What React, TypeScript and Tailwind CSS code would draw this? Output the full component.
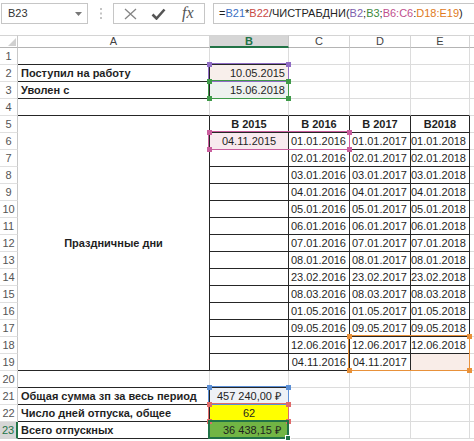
import React from 'react';

type Cell = { t?: string; b?: boolean; al?: 'l' | 'c' | 'r'; bg?: string; cls?: string };

const COLS = ['A', 'B', 'C', 'D', 'E', 'F'];
const COL_X: Record<string, number> = { A: 18, B: 209, C: 288, D: 349, E: 410, F: 469 };
const rowLine = (n: number) => 48 + n * 17 - 1; // bottom line of row n

const DARK = '#262626';

const dates = ['01.01', '02.01', '03.01', '04.01', '05.01', '06.01', '07.01', '08.01', '23.02', '08.03', '01.05', '09.05', '12.06', '04.11'];

const data: Record<string, Cell> = {
  A2: { t: 'Поступил на работу', b: true },
  B2: { t: '10.05.2015', al: 'r', bg: 'bg-[#f8efeb]' },
  A3: { t: 'Уволен с', b: true },
  B3: { t: '15.06.2018', al: 'r', bg: 'bg-[#eef2ef]' },
  A5: { t: 'Праздничные дни', b: true, al: 'c' },
  B5: { t: 'В 2015', b: true, al: 'c' },
  C5: { t: 'В 2016', b: true, al: 'c' },
  D5: { t: 'В 2017', b: true, al: 'c' },
  E5: { t: 'В2018', b: true, al: 'c' },
  B6: { t: '04.11.2015', al: 'c', bg: 'bg-[#f8eaee]' },
  A21: { t: 'Общая сумма зп за весь период', b: true },
  B21: { t: '457 240,00 ₽', al: 'c', bg: 'bg-[#eef1f6]' },
  A22: { t: 'Число дней отпуска, общее', b: true },
  B22: { t: '62', al: 'c', bg: 'bg-[#ffff00]' },
  A23: { t: 'Всего отпускных', b: true },
  B23: { t: '36 438,15 ₽', al: 'r', bg: 'bg-[#72b544]', cls: 'pr-[7px]' },
};

dates.forEach((d, i) => {
  const r = 6 + i;
  data['C' + r] = { t: d + '.2016', al: 'r' };
  data['D' + r] = { t: d + '.2017', al: 'r' };
  if (r !== 19) data['E' + r] = { t: d + '.2018', al: 'r' };
});
data.E19 = { bg: 'bg-[#f9ede8]' };

const bordered = (r: number, c: string) => {
  const ci = COLS.indexOf(c);
  if ((r === 2 || r === 3) && ci <= 1) return true;
  if (r >= 5 && r <= 19 && ci >= 0 && ci <= 4) return true;
  if (r >= 21 && r <= 23 && ci <= 1) return true;
  return false;
};

const nextCol = (c: string) => COLS[COLS.indexOf(c) + 1] ?? 'G';

const RangeBox = ({ c1, r1, c2, r2, color, thick }: { c1: string; r1: number; c2: string; r2: number; color: string; thick?: boolean }) => {
  const x1 = COL_X[c1];
  const x2 = COL_X[nextCol(c2)];
  const y1 = rowLine(r1 - 1);
  const y2 = rowLine(r2);
  const w = thick ? 2 : 1.5;
  const corners = [
    [x1, y1],
    [x2, y1],
    [x1, y2],
    [x2, y2],
  ];
  return (
    <>
      <div
        className="absolute pointer-events-none"
        style={{ left: x1 - w / 2, top: y1 - w / 2, width: x2 - x1 + w, height: y2 - y1 + w, border: `${w}px solid ${color}` }}
      />
      {!thick &&
        corners.map(([x, y], i) => (
          <div key={i} className="absolute w-[5px] h-[5px]" style={{ left: x - 2, top: y - 2, background: color }} />
        ))}
      {thick && <div className="absolute w-[6px] h-[6px] border border-white" style={{ left: x2 - 3, top: y2 - 3, background: color }} />}
    </>
  );
};

const App = () => {
  const rows = Array.from({ length: 23 }, (_, i) => i + 1);

  return (
    <div className="relative w-[474px] h-[441px] overflow-hidden bg-white text-[#1f1f1f] font-['Liberation_Sans',Arial,sans-serif]">
      {/* formula bar */}
      <div className="h-[35px] flex items-start pt-[3px] pl-[1px]">
        <div className="w-[87px] h-[21px] border border-[#c6c6c6] flex items-center justify-between pl-[6px] pr-[5px] text-[11px] text-[#333]">
          <span>B23</span>
          <svg width="7" height="4" viewBox="0 0 7 4">
            <path d="M0 0h7L3.5 4z" fill="#777" />
          </svg>
        </div>
        <div className="w-[25px] h-[21px] flex items-center justify-center">
          <svg width="2" height="11" viewBox="0 0 2 11">
            <rect x="0" y="0" width="2" height="2" fill="#c4c4c4" />
            <rect x="0" y="4.5" width="2" height="2" fill="#c4c4c4" />
            <rect x="0" y="9" width="2" height="2" fill="#c4c4c4" />
          </svg>
        </div>
        <div className="w-[92px] h-[21px] border border-[#c6c6c6] flex items-center pl-[10px]">
          <svg width="13" height="12" viewBox="0 0 13 12">
            <path d="M1 1L12 11M12 1L1 11" stroke="#858585" strokeWidth="1.3" fill="none" />
          </svg>
          <svg className="ml-[14px]" width="15" height="12" viewBox="0 0 15 12">
            <path d="M1.5 6.5L5.5 10.5L13.5 1.5" stroke="#555" strokeWidth="2.6" fill="none" />
          </svg>
          <span className="ml-[16px] text-[16px] leading-none italic text-[#555] font-['Liberation_Serif',serif] -mt-[2px]">fx</span>
        </div>
        <div className="ml-[8px] flex-1 h-[21px] border border-r-0 border-[#c6c6c6] flex items-center pl-[5px] text-[11px] whitespace-nowrap">
          <span>=</span>
          <span className="text-[#3b6fc4]">B21</span>
          <span>*</span>
          <span className="text-[#c94a45]">B22</span>
          <span>/ЧИСТРАБДНИ(</span>
          <span className="text-[#7d5fae]">B2</span>
          <span>;</span>
          <span className="text-[#3d8a3d]">B3</span>
          <span>;</span>
          <span className="text-[#bf4f8e]">B6:C6</span>
          <span>:</span>
          <span className="text-[#e07a22]">D18:E19</span>
          <span>)</span>
        </div>
      </div>

      {/* sheet */}
      <div className="grid grid-cols-[18px_192px_79px_61px_61px_59px_1fr] grid-rows-[13px_repeat(23,17px)] text-[11px]">
        {/* header row */}
        <div className="relative border-t border-t-[#d4d4d4] border-r border-r-[#c8c8c8] border-b border-b-[#b4b4b4]">
          <svg className="absolute right-[1px] bottom-[1px]" width="8" height="8" viewBox="0 0 8 8">
            <path d="M8 0V8H0z" fill="#d0d0d0" />
          </svg>
        </div>
        {COLS.map((c) =>
          c === 'B' ? (
            <div
              key={c}
              className="flex items-center justify-center border-t border-t-[#d4d4d4] border-r border-r-[#c8c8c8] border-b-2 border-b-[#217346] bg-[#d6d6d6] text-[#217346] font-bold leading-none"
            >
              B
            </div>
          ) : (
            <div
              key={c}
              className="flex items-center justify-center border-t border-t-[#d4d4d4] border-r border-r-[#d4d4d4] border-b border-b-[#b4b4b4] text-[#444] leading-none"
            >
              {c === 'F' ? '' : c}
            </div>
          )
        )}

        {rows.map((r) => (
          <React.Fragment key={r}>
            {r === 23 ? (
              <div className="flex items-center justify-center border-r-2 border-r-[#217346] border-b border-b-[#d4d4d4] bg-[#d6d6d6] text-[#217346] leading-none">
                {r}
              </div>
            ) : (
              <div className="flex items-center justify-center border-r border-r-[#c8c8c8] border-b border-b-[#e0e0e0] text-[#555] leading-none">
                {r}
              </div>
            )}
            {COLS.map((c) => {
              if (c === 'A' && r >= 6 && r <= 19) return null;
              const merged = c === 'A' && r === 5;
              const bottomRow = merged ? 19 : r;
              const cell = data[c + r] ?? {};
              const rightDark = bordered(r, c) || bordered(r, nextCol(c));
              const bottomDark = bordered(bottomRow, c) || bordered(bottomRow + 1, c);
              const al = cell.al === 'c' ? 'justify-center' : cell.al === 'r' ? 'justify-end' : 'justify-start';
              return (
                <div
                  key={c}
                  className={[
                    'flex items-center px-[3px] whitespace-nowrap overflow-hidden leading-none border-r border-b',
                    merged ? 'row-span-15' : '',
                    rightDark ? 'border-r-[#262626]' : 'border-r-[#dcdcdc]',
                    bottomDark ? 'border-b-[#262626]' : 'border-b-[#dcdcdc]',
                    al,
                    cell.b ? 'font-bold' : '',
                    cell.bg ?? '',
                    cell.cls ?? '',
                  ].join(' ')}
                >
                  {cell.t}
                </div>
              );
            })}
          </React.Fragment>
        ))}
      </div>

      {/* reference highlights */}
      <RangeBox c1="B" r1={2} c2="B" r2={2} color="#8f6cc4" />
      <RangeBox c1="B" r1={3} c2="B" r2={3} color="#3f9a49" />
      <RangeBox c1="B" r1={6} c2="C" r2={6} color="#c95d9d" />
      <RangeBox c1="D" r1={18} c2="E" r2={19} color="#e8913a" />
      <RangeBox c1="B" r1={21} c2="B" r2={21} color="#5b8fd6" />
      <RangeBox c1="B" r1={22} c2="B" r2={22} color="#e06a6a" />
      <RangeBox c1="B" r1={23} c2="B" r2={23} color="#217346" thick />
    </div>
  );
};

export default App;
